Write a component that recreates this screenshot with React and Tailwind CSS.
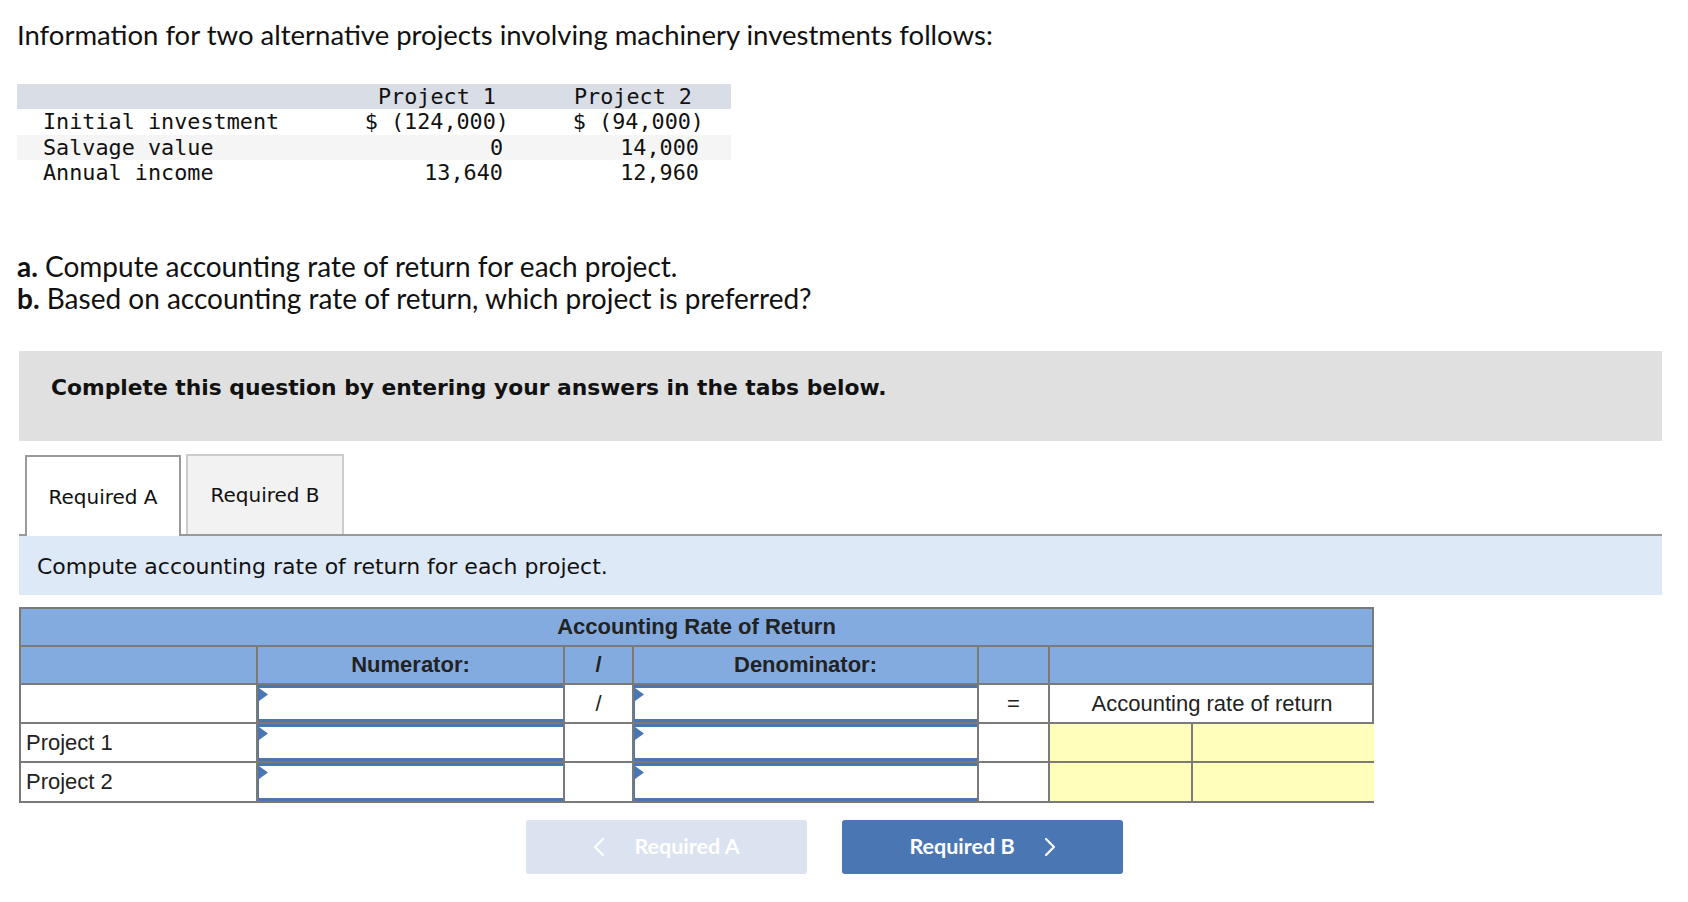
const sans = "font-['Lato','Open_Sans',sans-serif]";
const verdana = "font-['DejaVu_Sans','Verdana',sans-serif]";
const arial = "font-['Liberation_Sans','Arial',sans-serif]";
const mono = "font-['DejaVu_Sans_Mono','Liberation_Mono',monospace]";

const data = [
  { label: 'Initial investment', p1: '$ (124,000)', p2: '$ (94,000)', paren: true, bg: 'bg-white' },
  { label: 'Salvage value', p1: '0', p2: '14,000', bg: 'bg-[#f5f5f5]' },
  { label: 'Annual income', p1: '13,640', p2: '12,960', bg: 'bg-white' },
];

function InputCell() {
  return (
    <div className="relative h-full border-l border-[#4a76b4] border-t-[3px] border-b-[3px] bg-white">
      <svg className="absolute left-0 top-0" width="9" height="13" viewBox="0 0 9 13">
        <polygon points="0,0 9,6.5 0,13" fill="#4a76b4" />
      </svg>
    </div>
  );
}

function Chevron({ dir }) {
  return (
    <svg width="12" height="20" viewBox="0 0 12 20" fill="none" stroke="currentColor" strokeWidth="2.2" strokeLinecap="round" strokeLinejoin="round">
      {dir === 'left'
        ? <polyline points="10,2 2,10 10,18" />
        : <polyline points="2,2 10,10 2,18" />}
    </svg>
  );
}

function App() {
  const cols = 'grid grid-cols-[237px_307px_69px_345px_71px_143px_181px]';
  const cell = 'border-r-2 border-[#7a7a7a]';
  const dataCols = 'grid grid-cols-[26px_270px_196px_195px_1fr]';

  return (
    <div className="bg-white min-h-screen text-[#111] pb-6">
      {/* heading */}
      <p className={`${sans} text-[27.5px] pl-[17px] pt-[19px] leading-[32px]`}>
        Information for two alternative projects involving machinery investments follows:
      </p>

      {/* data table */}
      <div className={`${mono} text-[21.8px] leading-[25px] mt-[33px] ml-[17px] w-[714px]`}>
        <div className={`${dataCols} bg-[#d9dde6] h-[25px]`}>
          <span />
          <span />
          <span className="text-right pr-[13px]">Project 1</span>
          <span className="text-right pr-[12px]">Project 2</span>
          <span />
        </div>
        {data.map(r => (
          <div key={r.label} className={`${dataCols} h-[25.5px] ${r.bg}`}>
            <span />
            <span className="whitespace-pre">{r.label}</span>
            <span className={`text-right ${r.paren ? 'pr-0' : 'pr-[6px]'}`}>{r.p1}</span>
            <span className={`text-right ${r.paren ? 'pr-0' : 'pr-[5px]'}`}>{r.p2}</span>
            <span />
          </div>
        ))}
      </div>

      {/* instructions */}
      <div className={`${sans} text-[28px] leading-[32px] pl-[17px] mt-[64px]`}>
        <p><b>a.</b> Compute accounting rate of return for each project.</p>
        <p><b>b.</b> Based on accounting rate of return, which project is preferred?</p>
      </div>

      <div className="ml-[19px] mr-[26px]">
        {/* notice */}
        <div className={`${verdana} mt-[37px] h-[90px] bg-[#e0e0e0] pl-[32px] pt-[24px] leading-[26px] text-[21.8px] font-bold`}>
          Complete this question by entering your answers in the tabs below.
        </div>

        {/* tabs */}
        <div className={`${verdana} text-[20px] mt-[13px] flex items-end gap-[5px] pl-[6px] border-b-2 border-[#9a9a9a]`}>
          <div className="w-[156px] h-[81px] border-2 border-b-0 border-[#9a9a9a] bg-white -mb-[2px] flex items-center justify-center pt-[2px]">
            Required A
          </div>
          <div className="w-[158px] h-[80px] border-2 border-b-0 border-[#cccccc] bg-[#f2f2f2] flex items-center justify-center">
            Required B
          </div>
        </div>

        <div className={`${verdana} bg-[#dde9f7] h-[59px] flex items-center pl-[18px] pt-[2px] text-[22px]`}>
          Compute accounting rate of return for each project.
        </div>

        {/* ARR table */}
        <div className={`${arial} mt-[12px] w-[1355px] border-2 border-[#7a7a7a] text-[22px] text-[#222]`}>
          <div className="h-[38px] bg-[#84abdf] border-b-2 border-[#7a7a7a] flex items-center justify-center font-bold">
            Accounting Rate of Return
          </div>
          <div className={`${cols} h-[38px] bg-[#84abdf] border-b-2 border-[#7a7a7a] font-bold`}>
            <div className={cell} />
            <div className={`${cell} flex items-center justify-center`}>Numerator:</div>
            <div className={`${cell} flex items-center justify-center`}>/</div>
            <div className={`${cell} flex items-center justify-center`}>Denominator:</div>
            <div className={cell} />
            <div className="col-span-2" />
          </div>
          <div className={`${cols} h-[39px] border-b-2 border-[#7a7a7a]`}>
            <div className={cell} />
            <div className={cell}><InputCell /></div>
            <div className={`${cell} flex items-center justify-center`}>/</div>
            <div className={cell}><InputCell /></div>
            <div className={`${cell} flex items-center justify-center`}>=</div>
            <div className="col-span-2 flex items-center justify-center">Accounting rate of return</div>
          </div>
          {['Project 1', 'Project 2'].map((p, i) => (
            <div key={p} className={`${cols} ${i === 0 ? 'h-[39px] border-b-2 border-[#7a7a7a]' : 'h-[38px]'}`}>
              <div className={`${cell} flex items-center pl-[5px]`}>{p}</div>
              <div className={cell}><InputCell /></div>
              <div className={cell} />
              <div className={cell}><InputCell /></div>
              <div className={cell} />
              <div className={`${cell} bg-[#ffffbb]`} />
              <div className="bg-[#ffffbb]" />
            </div>
          ))}
        </div>

        {/* nav buttons */}
        <div className={`${sans} flex gap-[35px] ml-[507px] mt-[17px] font-bold text-[21.5px] text-white`}>
          <button className="w-[281px] h-[54px] rounded-[3px] bg-[#dae3ef] flex items-center justify-center gap-[29px]">
            <Chevron dir="left" />
            <span>Required A</span>
          </button>
          <button className="w-[281px] h-[54px] rounded-[3px] bg-[#4a76b4] flex items-center justify-center gap-[29px]">
            <span>Required B</span>
            <Chevron dir="right" />
          </button>
        </div>
      </div>
    </div>
  );
}

export default App;
